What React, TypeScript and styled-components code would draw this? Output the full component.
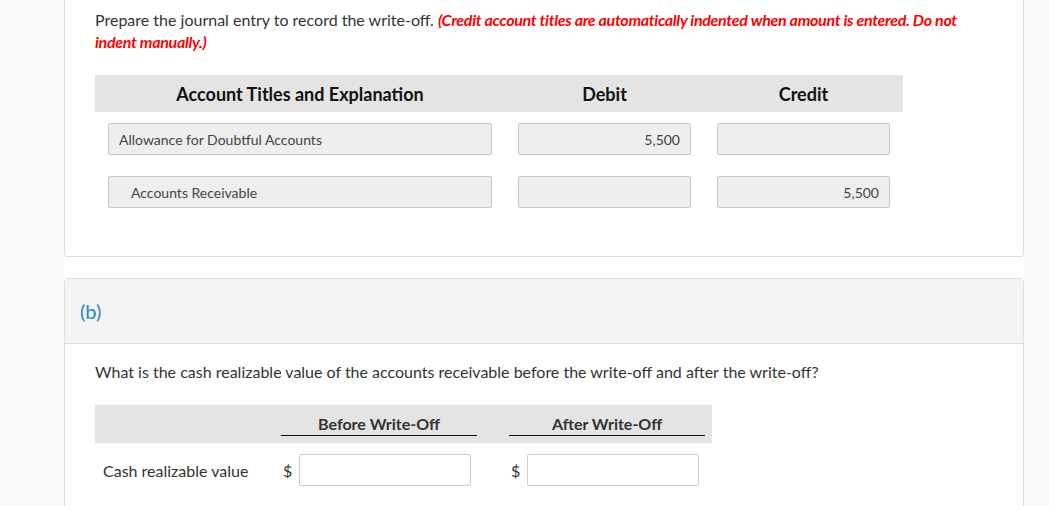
import React from 'react';
import styled, { createGlobalStyle } from 'styled-components';

const GlobalStyle = createGlobalStyle`
  html, body {
    margin: 0;
    padding: 0;
    background: #f9f9f9;
    font-family: Lato, "Open Sans", Arial, sans-serif;
    color: #333;
  }
`;

const Page = styled.div`
  margin-left: 64px;
  width: 960px;
  background: #fff;
  min-height: 506px;
`;

const Card = styled.section<{ $open?: boolean }>`
  border: 1px solid #dcdcdc;
  border-top: ${({ $open }) => ($open ? 'none' : '1px solid #dcdcdc')};
  border-radius: ${({ $open }) => ($open ? '0 0 4px 4px' : '4px 4px 0 0')};
  background: #fff;
`;

const CardBody = styled.div<{ $top: number; $bottom: number }>`
  padding: ${({ $top, $bottom }) => `${$top}px 30px ${$bottom}px 30px`};
`;

const CardHeader = styled.div`
  height: 64px;
  background: #f4f4f4;
  border-bottom: 1px solid #dcdcdc;
  display: flex;
  align-items: center;
  padding-left: 15px;
  font-size: 20px;
  color: #1a8ac4;
`;

const Gap = styled.div`
  height: 21px;
`;

const Prompt = styled.p`
  margin: 0;
  font-size: 16px;
  line-height: 22px;
  color: #333;
`;

const Note = styled.em`
  color: #ff0000;
  font-weight: 700;
  letter-spacing: -0.3px;
`;

const Journal = styled.div`
  margin-top: 22px;
  width: 808px;
`;

const JournalRow = styled.div<{ $head?: boolean; $gap?: number }>`
  display: grid;
  grid-template-columns: 410px 199px 199px;
  align-items: center;
  height: ${({ $head }) => ($head ? '37px' : '32px')};
  margin-top: ${({ $gap }) => $gap ?? 0}px;
  background: ${({ $head }) => ($head ? '#e4e4e4' : 'transparent')};
`;

const HeadCell = styled.div`
  text-align: center;
  font-size: 18px;
  font-weight: 700;
  color: #111;
`;

const Field = styled.div<{ $indent?: boolean; $right?: boolean }>`
  margin: 0 13px;
  height: 32px;
  box-sizing: border-box;
  background: #eeeeee;
  border: 1px solid #cacaca;
  border-radius: 2px;
  display: flex;
  align-items: center;
  justify-content: ${({ $right }) => ($right ? 'flex-end' : 'flex-start')};
  padding: 0 10px 0 ${({ $indent }) => ($indent ? '22px' : '10px')};
  font-size: 14px;
  color: #444;
`;

const Question = styled.p`
  margin: 0;
  font-size: 16px;
  line-height: 22px;
  color: #333;
`;

const ValueTable = styled.div`
  margin-top: 22px;
  width: 617px;
`;

const ValueRow = styled.div<{ $head?: boolean }>`
  display: grid;
  grid-template-columns: 186px 196px 32px 196px 7px;
  align-items: ${({ $head }) => ($head ? 'end' : 'center')};
  height: ${({ $head }) => ($head ? '38px' : '32px')};
  margin-top: ${({ $head }) => ($head ? '0' : '11px')};
  background: ${({ $head }) => ($head ? '#e4e4e4' : 'transparent')};
`;

const ColTitle = styled.div<{ $col: number }>`
  grid-column: ${({ $col }) => $col};
  margin-bottom: 7px;
  border-bottom: 1px solid #111;
  text-align: center;
  font-size: 16px;
  font-weight: 700;
  line-height: 22px;
  color: #333;
`;

const RowLabel = styled.div`
  padding-left: 8px;
  font-size: 16px;
  color: #333;
`;

const MoneyCell = styled.div<{ $col: number }>`
  grid-column: ${({ $col }) => $col};
  display: flex;
  align-items: center;
  gap: 7px;
  padding-left: 2px;
  font-size: 16px;
  color: #333;
`;

const Input = styled.input`
  width: 172px;
  height: 32px;
  box-sizing: border-box;
  border: 1px solid #cccccc;
  border-radius: 2px;
  background: #fff;
  font: inherit;
  font-size: 14px;
  padding: 0 8px;
  outline: none;
`;

const entries = [
  { title: 'Allowance for Doubtful Accounts', debit: '5,500', credit: '', indent: false },
  { title: 'Accounts Receivable', debit: '', credit: '5,500', indent: true },
];

export default function App() {
  return (
    <>
      <GlobalStyle />
      <Page>
        <Card $open>
          <CardBody $top={9} $bottom={48}>
            <Prompt>
              Prepare the journal entry to record the write-off.{' '}
              <Note>
                (Credit account titles are automatically indented when amount is entered. Do not
                indent manually.)
              </Note>
            </Prompt>
            <Journal>
              <JournalRow $head>
                <HeadCell>Account Titles and Explanation</HeadCell>
                <HeadCell>Debit</HeadCell>
                <HeadCell>Credit</HeadCell>
              </JournalRow>
              {entries.map((e, i) => (
                <JournalRow key={e.title} $gap={i === 0 ? 11 : 21}>
                  <Field $indent={e.indent}>{e.title}</Field>
                  <Field $right>{e.debit}</Field>
                  <Field $right>{e.credit}</Field>
                </JournalRow>
              ))}
            </Journal>
          </CardBody>
        </Card>
        <Gap />
        <Card>
          <CardHeader>(b)</CardHeader>
          <CardBody $top={17} $bottom={40}>
            <Question>
              What is the cash realizable value of the accounts receivable before the write-off and after the write-off?
            </Question>
            <ValueTable>
              <ValueRow $head>
                <ColTitle $col={2}>Before Write-Off</ColTitle>
                <ColTitle $col={4}>After Write-Off</ColTitle>
              </ValueRow>
              <ValueRow>
                <RowLabel>Cash realizable value</RowLabel>
                <MoneyCell $col={2}>
                  $<Input />
                </MoneyCell>
                <MoneyCell $col={4}>
                  $<Input />
                </MoneyCell>
              </ValueRow>
            </ValueTable>
          </CardBody>
        </Card>
      </Page>
    </>
  );
}
